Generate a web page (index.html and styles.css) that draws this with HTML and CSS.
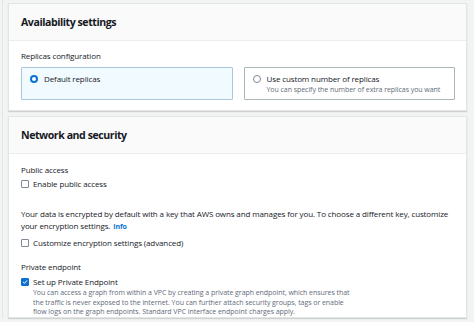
FILE: index.html
```html
<!DOCTYPE html>
<html>
<head>
<meta charset="utf-8">
<link rel="stylesheet" href="styles.css">
</head>
<body>
<div class="page">
  <section class="card card-first">
    <header class="card-header"><h2>Availability settings</h2></header>
    <div class="card-body body-avail">
      <div class="label">Replicas configuration</div>
      <div class="tiles">
        <div class="tile tile-selected">
          <span class="radio radio-on"></span>
          <div class="tile-text"><div class="tile-title">Default replicas</div></div>
        </div>
        <div class="tile">
          <span class="radio"></span>
          <div class="tile-text">
            <div class="tile-title">Use custom number of replicas</div>
            <div class="tile-desc">You can specify the number of extra replicas you want</div>
          </div>
        </div>
      </div>
    </div>
  </section>
  <section class="card">
    <header class="card-header"><h2>Network and security</h2></header>
    <div class="card-body body-net">
      <div class="label">Public access</div>
      <div class="check-row"><span class="checkbox"></span><span>Enable public access</span></div>
      <div class="para">
        <span class="ln">Your data is encrypted by default with a key that AWS owns and manages for you. To choose a different key, customize</span>
        <div class="para-end"><span>your encryption settings.</span><a class="info">Info</a></div>
      </div>
      <div class="check-row"><span class="checkbox"></span><span>Customize encryption settings (advanced)</span></div>
      <div class="label label-pe">Private endpoint</div>
      <div class="check-row check-top">
        <span class="checkbox checked"><svg viewBox="0 0 10 10" width="8" height="8"><path d="M2 5.2 L4.2 7.3 L8 2.8" fill="none" stroke="#fff" stroke-width="1.6" stroke-linecap="round" stroke-linejoin="round"/></svg></span>
        <div>
          <div>Set up Private Endpoint</div>
          <div class="desc">
            <span class="ln">You can access a graph from within a VPC by creating a private graph endpoint, which ensures that</span>
            <span class="ln">the traffic is never exposed to the internet. You can further attach security groups, tags or enable</span>
            <span class="ln">flow logs on the graph endpoints. Standard VPC interface endpoint charges apply.</span>
          </div>
        </div>
      </div>
    </div>
  </section>
</div>
</body>
</html>
```
FILE: styles.css
```css
* { box-sizing: border-box; }
html, body { margin: 0; padding: 0; }
body {
  background: #f2f3f3;
  font-family: "Open Sans", "Liberation Sans", sans-serif;
  font-size: 8px;
  letter-spacing: -0.12px;
  color: #16191f;
  width: 474px;
  height: 322px;
  overflow: hidden;
}
.page {
  padding: 3px 8px 0 5px;
  display: flex;
  flex-direction: column;
  gap: 5px;
  border-left: 1px solid #e4e6e6;
  margin-left: 2px;
}
.card {
  background: #fff;
  border: 1px solid #e3e5e5;
  box-shadow: 0 1px 1px rgba(0,28,36,0.15);
  width: 459px;
}
.card-header {
  background: #fafafa;
  border-bottom: 1px solid #eaeded;
  height: 37px;
  display: flex;
  align-items: center;
  padding: 0 12px;
}
.card-header h2 {
  margin: 0;
  font-size: 10.6px;
  letter-spacing: -0.45px;
  font-weight: 700;
}
.card-body { padding: 0 11px 0 12px; }
.body-avail { padding-top: 9px; padding-bottom: 10px; }
.label { line-height: 12px; }
.tiles {
  display: flex;
  gap: 11px;
  margin-top: 5px;
}
.tile {
  flex: 1;
  height: 33px;
  border: 1px solid #aab7b8;
  border-radius: 1px;
  display: flex;
  align-items: flex-start;
  padding: 6px 8px;
  gap: 6px;
}
.tile-selected {
  background: #f1faff;
  border-color: #a9c6dd;
}
.radio {
  width: 8px;
  height: 8px;
  border-radius: 50%;
  border: 1px solid #7d8998;
  background: #fff;
  flex: none;
  margin-top: 1px;
}
.radio-on { border: 2.5px solid #0972d3; }
.tile-title { line-height: 10px; }
.tile-desc { color: #5f6b7a; font-size: 7px; line-height: 11px; letter-spacing: -0.05px; }
.body-net { padding-top: 10px; }
.check-row {
  display: flex;
  align-items: center;
  gap: 4px;
  line-height: 12px;
  margin-top: 2px;
}
.check-top { align-items: flex-start; margin-top: 3px; }
.check-top .checkbox { margin-top: 2px; }
.checkbox {
  width: 8px;
  height: 8px;
  border: 1px solid #7d8998;
  border-radius: 1px;
  background: #fff;
  flex: none;
  display: flex;
  align-items: center;
  justify-content: center;
}
.checkbox.checked { background: #0972d3; border-color: #0972d3; }
.para { margin: 18px 0 0; line-height: 12px; }
.para-end { display: flex; align-items: baseline; gap: 3px; }
.para + .check-row { margin-top: 4px; }
.info { color: #0972d3; font-weight: 700; font-size: 7px; }
.label-pe { margin-top: 12px; }
.desc { color: #5f6b7a; font-size: 7px; line-height: 9.7px; letter-spacing: -0.05px; }
.ln { display: block; white-space: nowrap; }
```
